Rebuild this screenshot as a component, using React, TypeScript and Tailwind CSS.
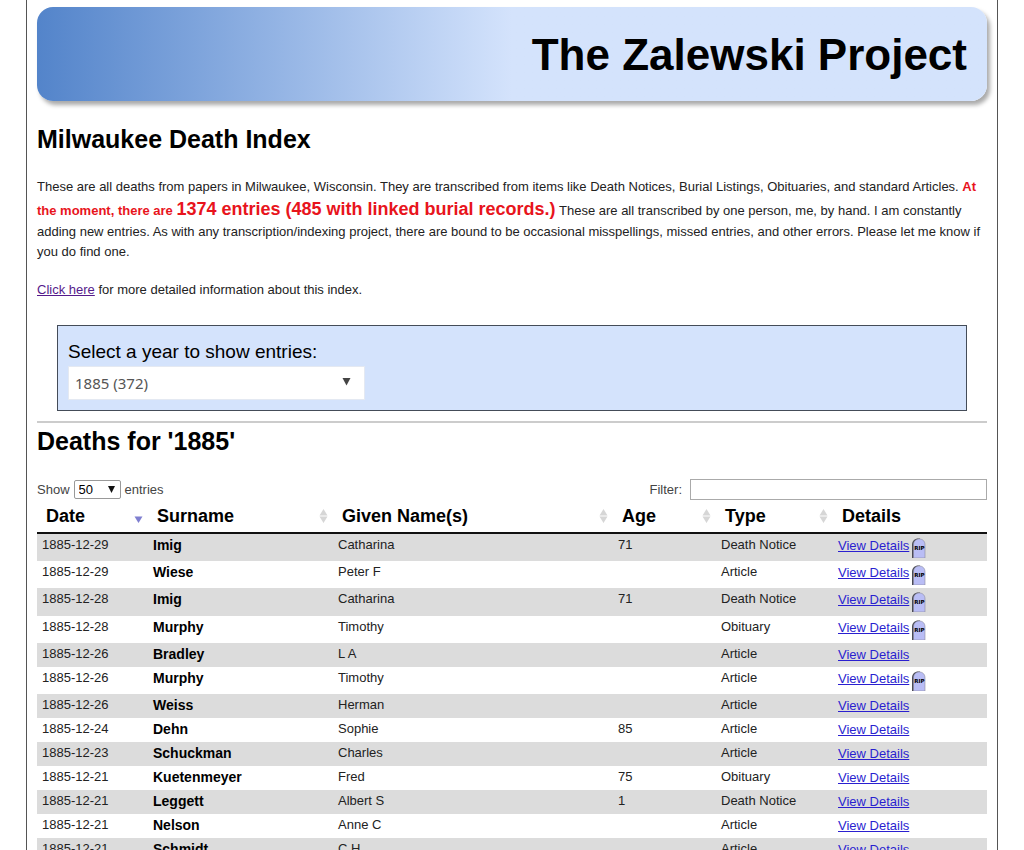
import React from "react";

type Entry = {
  date: string;
  surname: string;
  given: string;
  age?: string;
  type: string;
  burial?: boolean;
};

const entries: Entry[] = [
  { date: "1885-12-29", surname: "Imig", given: "Catharina", age: "71", type: "Death Notice", burial: true },
  { date: "1885-12-29", surname: "Wiese", given: "Peter F", type: "Article", burial: true },
  { date: "1885-12-28", surname: "Imig", given: "Catharina", age: "71", type: "Death Notice", burial: true },
  { date: "1885-12-28", surname: "Murphy", given: "Timothy", type: "Obituary", burial: true },
  { date: "1885-12-26", surname: "Bradley", given: "L A", type: "Article" },
  { date: "1885-12-26", surname: "Murphy", given: "Timothy", type: "Article", burial: true },
  { date: "1885-12-26", surname: "Weiss", given: "Herman", type: "Article" },
  { date: "1885-12-24", surname: "Dehn", given: "Sophie", age: "85", type: "Article" },
  { date: "1885-12-23", surname: "Schuckman", given: "Charles", type: "Article" },
  { date: "1885-12-21", surname: "Kuetenmeyer", given: "Fred", age: "75", type: "Obituary" },
  { date: "1885-12-21", surname: "Leggett", given: "Albert S", age: "1", type: "Death Notice" },
  { date: "1885-12-21", surname: "Nelson", given: "Anne C", type: "Article" },
  { date: "1885-12-21", surname: "Schmidt", given: "C H", type: "Article" },
];

function Tombstone() {
  return (
    <svg width="15" height="20" viewBox="0 0 15 20" aria-hidden="true">
      <path d="M1 20V7C1 3 3.5 0.5 7.500 0.500H9V20Z" fill="#4a4a55" />
      <path d="M2.500 20V7C2.500 3.500 4.500 1 8.300 1C12 1 14 3.500 14 7V20Z" fill="#b9bdf5" stroke="#8a8a9c" strokeWidth="0.6" />
      <text x="8.300" y="11.500" textAnchor="middle" fontSize="5.500" fontWeight="bold" fontFamily="DejaVu Sans" fill="#000">
        RIP
      </text>
    </svg>
  );
}

function SortIcon({ active = false }: { active?: boolean }) {
  return (
    <svg width="9" height="14" viewBox="0 0 9 14" aria-hidden="true">
      {active ? (
        <path d="M0.500 7.500H8.500L4.500 14Z" fill="#7f7fd0" />
      ) : (
        <path d="M0.500 6.500L4.500 0L8.500 6.500ZM0.500 7.500H8.500L4.500 14Z" fill="#d6d6d6" />
      )}
    </svg>
  );
}

const columns = [
  { label: "Date", width: "w-[111px]", sort: "active" },
  { label: "Surname", width: "w-[185px]", sort: "both" },
  { label: "Given Name(s)", width: "", sort: "both" },
  { label: "Age", width: "w-[103px]", sort: "both" },
  { label: "Type", width: "w-[117px]", sort: "both" },
  { label: "Details", width: "w-[154px]", sort: "none" },
];

export default function App() {
  return (
    <div className="h-screen overflow-hidden bg-white font-['Liberation_Sans',Arial,sans-serif] text-[13px] text-[#222]">
      <div className="mx-[26px] min-h-screen border-x border-[#555] px-2.5 pt-[7px]">
        <header className="flex h-[94px] items-center justify-end rounded-2xl bg-linear-to-r from-[#5384ca] to-[#d4e3fc] to-50% px-5 pt-0.5 shadow-[3px_4px_4px_#aaa]">
          <h1 className="text-[44px] leading-[52px] font-bold text-black">The Zalewski Project</h1>
        </header>

        <main>
          <h2 className="mt-[22px] text-[25px] leading-8 font-bold text-black">Milwaukee Death Index</h2>
          <p className="mt-[22px] leading-5">
            These are all deaths from papers in Milwaukee, Wisconsin. They are transcribed from items like Death
            Notices, Burial Listings, Obituaries, and standard Articles.{" "}
            <strong className="text-[#e8141c]">
              At the moment, there are{" "}
              <span className="text-lg leading-[25px]">1374 entries (485 with linked burial records.)</span>
            </strong>{" "}
            These are all transcribed by one person, me, by hand. I am constantly adding new entries. As with any
            transcription/indexing project, there are bound to be occasional misspellings, missed entries, and other
            errors. Please let me know if you do find one.
          </p>
          <p className="mt-[18px] leading-5">
            <a href="#about" className="text-[#551a8b] underline">Click here</a> for more detailed information about
            this index.
          </p>

          <form className="mx-5 mt-[25px] border border-[#444c58] bg-[#d4e3fc] px-2.5 pt-3 pb-2.5 text-black">
            <label htmlFor="year" className="block text-[19px] leading-7">Select a year to show entries:</label>
            <div className="relative w-[297px]">
              <select
                id="year"
                className="h-[34px] w-full appearance-none border border-[#e4e9f2] bg-white px-1.5 font-['Noto_Sans',sans-serif] text-[15px] text-[#555]"
              >
                <option>1885 (372)</option>
              </select>
              <svg className="pointer-events-none absolute top-3 right-3.5" width="9" height="8" viewBox="0 0 9 8" aria-hidden="true">
                <path d="M0.500 0H8.500L4.500 7.500Z" fill="#444" />
              </svg>
            </div>
          </form>

          <hr className="mt-2.5 border-t-2 border-[#ccc]" />
          <h2 className="mt-0.5 text-[25px] leading-8 font-bold text-black">Deaths for '1885'</h2>

          <div className="mt-[22px] flex items-center justify-between text-[#444]">
            <div className="flex items-center gap-1">
              <label htmlFor="length">Show</label>
              <div className="relative">
                <select id="length" className="block h-[19px] w-[47px] appearance-none rounded-xs border border-[#999] bg-white pl-1 text-[13px] leading-4 text-black">
                  <option>50</option>
                </select>
                <svg className="pointer-events-none absolute top-1.5 right-1.5" width="7" height="7" viewBox="0 0 7 7" aria-hidden="true">
                  <path d="M0 0H7L3.500 7Z" fill="#111" />
                </svg>
              </div>
              <span>entries</span>
            </div>
            <div className="flex items-center gap-2">
              <label htmlFor="filter">Filter:</label>
              <input id="filter" type="text" className="h-[21px] w-[297px] border border-[#aaa] bg-white px-1" />
            </div>
          </div>

          <table className="w-full table-fixed border-collapse">
            <thead>
              <tr className="border-b-2 border-[#111] text-left text-lg leading-6 text-black">
                {columns.map((c) => (
                  <th key={c.label} className={`${c.width} h-[33px] p-0 pr-[5px] pl-[9px] align-middle font-bold`}>
                    <div className="flex items-center justify-between">
                      <span>{c.label}</span>
                      {c.sort !== "none" && <SortIcon active={c.sort === "active"} />}
                    </div>
                  </th>
                ))}
              </tr>
            </thead>
            <tbody>
              {entries.map((e, i) => (
                <tr
                  key={i}
                  className={`align-top leading-4 odd:bg-[#dcdcdc] ${e.burial ? "odd:h-7 even:h-[27px]" : "h-6"}`}
                >
                  <td className="px-[5px] pt-[3px] pb-0">{e.date}</td>
                  <td className="px-[5px] pt-[3px] pb-0 text-sm leading-4 font-bold text-black">{e.surname}</td>
                  <td className="px-[5px] pt-[3px] pb-0">{e.given}</td>
                  <td className="px-[5px] pt-[3px] pb-0">{e.age}</td>
                  <td className="px-[5px] pt-[3px] pb-0">{e.type}</td>
                  <td className="px-[5px] pt-1 pb-0">
                    <div className="flex items-start gap-0.5">
                      <a href="#details" className="text-[#2a1fd0] underline">View Details</a>
                      {e.burial && <Tombstone />}
                    </div>
                  </td>
                </tr>
              ))}
            </tbody>
          </table>
        </main>
      </div>
    </div>
  );
}
